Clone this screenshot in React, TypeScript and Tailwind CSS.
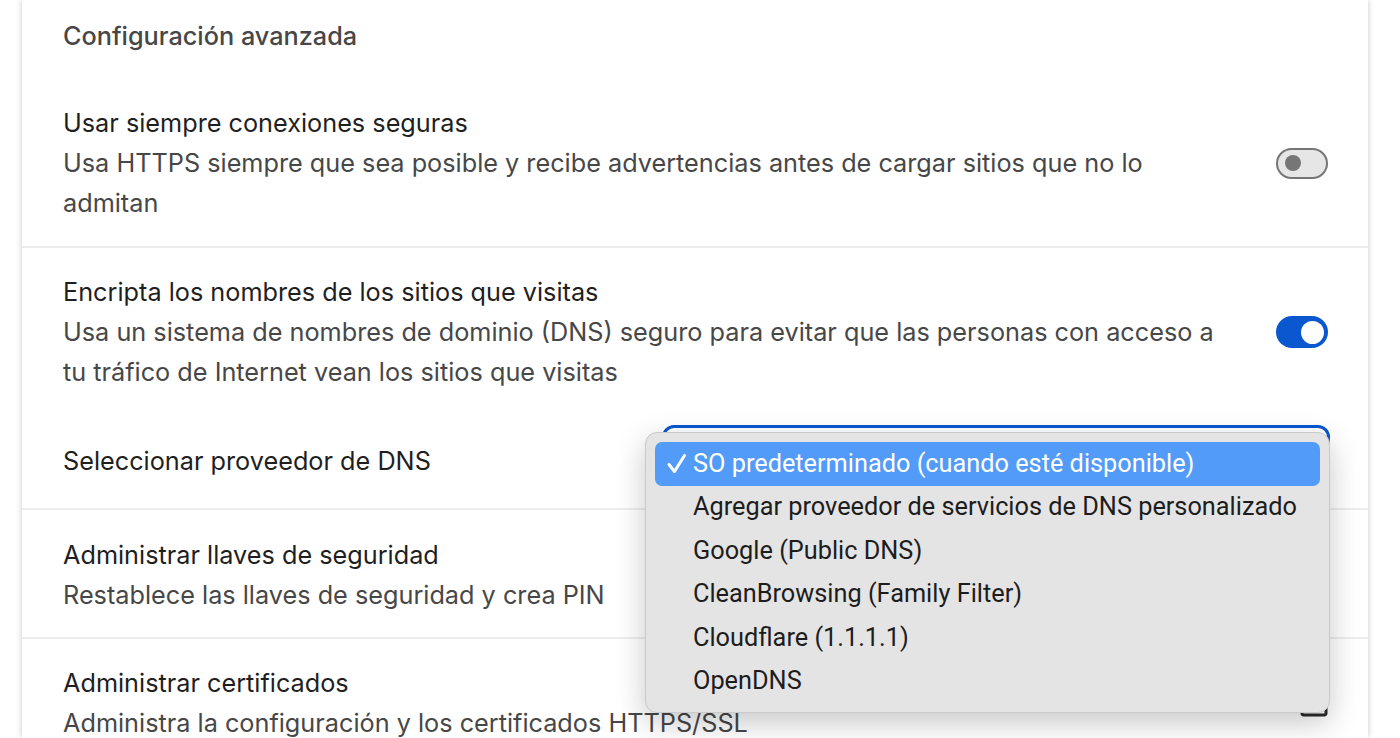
import React from "react";

const MENU_ITEMS = [
  "SO predeterminado (cuando esté disponible)",
  "Agregar proveedor de servicios de DNS personalizado",
  "Google (Public DNS)",
  "CleanBrowsing (Family Filter)",
  "Cloudflare (1.1.1.1)",
  "OpenDNS",
];

function Toggle({ on }: { on: boolean }) {
  if (on) {
    return (
      <div className="flex h-[32px] w-[52px] shrink-0 items-center justify-end rounded-full bg-[#0b57d0] pr-[4px]">
        <span className="h-[23px] w-[23px] rounded-full bg-white" />
      </div>
    );
  }
  return (
    <div className="flex h-[31px] w-[52px] shrink-0 items-center rounded-full border-2 border-[#767676] bg-[#e6e6e6] pl-[7px]">
      <span className="h-[16px] w-[16px] rounded-full bg-[#767676]" />
    </div>
  );
}

export default function App() {
  return (
    <div className="relative h-[738px] w-[1400px] overflow-hidden bg-white font-[Inter,sans-serif] text-[25.25px] leading-[40px]">
      {/* settings card */}
      <div className="ml-[22px] h-full w-[1346px] bg-white shadow-[0_0_6px_rgba(0,0,0,0.22)]">
        <div className="h-[79px] pl-[41px] pt-[16px] font-medium text-[#474747]">Configuración avanzada</div>

        {/* HTTPS */}
        <div className="flex items-center border-b-2 border-[#ededed] pb-[23px] pl-[41px] pr-[40px] pt-[24px]">
          <div className="flex-1 pr-[55px]">
            <div className="text-[#1f1f1f]">Usar siempre conexiones seguras</div>
            <div className="text-[#474747]">
              Usa HTTPS siempre que sea posible y recibe advertencias antes de cargar sitios que no lo admitan
            </div>
          </div>
          <Toggle on={false} />
        </div>

        {/* DNS */}
        <div className="flex items-center pl-[41px] pr-[40px] pt-[24px]">
          <div className="flex-1 pr-[55px]">
            <div className="text-[#1f1f1f]">Encripta los nombres de los sitios que visitas</div>
            <div className="text-[#474747]">
              Usa un sistema de nombres de dominio (DNS) seguro para evitar que las personas con acceso a tu tráfico de
              Internet vean los sitios que visitas
            </div>
          </div>
          <Toggle on={true} />
        </div>
        <div className="flex items-center border-b-2 border-[#ededed] pb-[11px] pl-[41px] pr-[38px] pt-[33px]">
          <div className="flex-1 text-[#1f1f1f]">Seleccionar proveedor de DNS</div>
          <div className="h-[72px] w-[668px] rounded-[12px] border-[3px] border-[#0b57d0] bg-white" />
        </div>

        {/* security keys */}
        <div className="border-b-2 border-[#ededed] pb-[22px] pl-[41px] pr-[40px] pt-[25px]">
          <div className="text-[#1f1f1f]">Administrar llaves de seguridad</div>
          <div className="text-[#474747]">Restablece las llaves de seguridad y crea PIN</div>
        </div>

        {/* certificates */}
        <div className="flex items-center pl-[41px] pr-[36px] pt-[24px]">
          <div className="flex-1">
            <div className="text-[#1f1f1f]">Administrar certificados</div>
            <div className="text-[#474747]">Administra la configuración y los certificados HTTPS/SSL</div>
          </div>
          <svg width="36" height="36" viewBox="0 0 24 24" fill="#2b2b2b">
            <path d="M19 19H5V5h7V3H5c-1.11 0-2 .9-2 2v14c0 1.1.89 2 2 2h14c1.1 0 2-.9 2-2v-7h-2v7zM14 3v2h3.59l-9.83 9.83 1.41 1.41L19 6.41V10h2V3h-7z" />
          </svg>
        </div>
      </div>

      {/* native popup menu */}
      <div className="absolute left-[645px] top-[432px] w-[685px] rounded-[12px] border border-[#c9c9c9] bg-[#e4e4e4] px-[9px] pb-[9px] pt-[9px] font-[Roboto,sans-serif] text-[25.3px] text-[#1d1d1d] shadow-[0_10px_30px_rgba(0,0,0,0.22)]">
        {MENU_ITEMS.map((item, i) => (
          <div
            key={item}
            className={
              i === 0
                ? "flex h-[43.5px] items-center rounded-[7px] bg-[#539bf9] pl-[11px] text-white"
                : "flex h-[43.5px] items-center pl-[38px]"
            }
          >
            {i === 0 && (
              <svg width="27" height="24" viewBox="0 0 27 24" className="shrink-0">
                <path d="M3 12.5 L8.5 19.5 L18.5 3.5" fill="none" stroke="white" strokeWidth="3" strokeLinecap="round" strokeLinejoin="round" />
              </svg>
            )}
            {item}
          </div>
        ))}
      </div>
    </div>
  );
}
